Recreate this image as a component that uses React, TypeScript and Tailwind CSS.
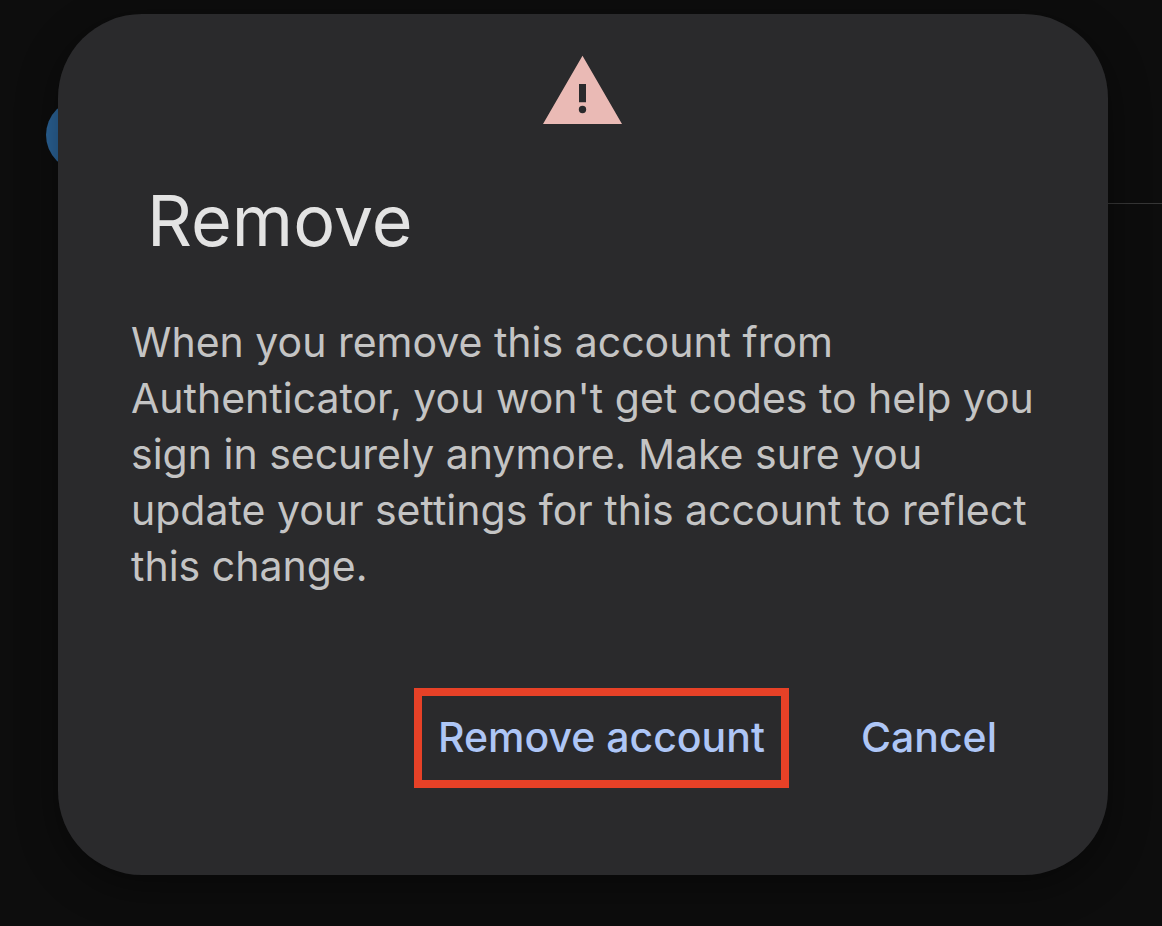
function WarningIcon() {
  return (
    <svg viewBox="0 0 80 70" className="w-20 h-[70px]" aria-hidden="true">
      <path
        fillRule="evenodd"
        fill="#eabab5"
        d="M39.5 .8 79 69H0L39.5 .8ZM36 29v18.2h7V29ZM39.5 50.8a3.7 3.7 0 1 0 0 7.4 3.7 3.7 0 0 0 0-7.4Z"
      />
    </svg>
  );
}

// Dimmed account row that sits behind the dialog
function AccountRow() {
  return (
    <div className="flex h-[204px] items-end pl-[46px]" aria-hidden="true">
      <div className="mb-[33px] h-[72px] w-[72px] shrink-0 rounded-full bg-[#2b6397]" />
      <div className="ml-6 h-px flex-1 bg-[#363636]" />
    </div>
  );
}

export default function App() {
  return (
    <div className="relative min-h-screen overflow-hidden bg-[#0d0d0d] font-['Inter',sans-serif]">
      <AccountRow />

      <div className="absolute inset-0 pt-[14px] pr-[54px] pl-[58px]">
        <div
          role="alertdialog"
          aria-labelledby="dialog-title"
          aria-describedby="dialog-text"
          className="rounded-[84px] bg-[#2a2a2c] px-[73px] pt-[41px] pb-[87px] shadow-[0_12px_40px_rgba(0,0,0,0.4)]"
        >
          <div className="flex justify-center">
            <WarningIcon />
          </div>

          <h1
            id="dialog-title"
            className="mt-14 pl-4 text-[70px] leading-[80px] font-normal text-[#e3e3e3]"
          >
            Remove
          </h1>

          <p id="dialog-text" className="mt-[53px] text-[41px] leading-[56px] text-[#c4c4c4]">
            When you remove this account from Authenticator, you won't get codes to help you sign in
            securely anymore. Make sure you update your settings for this account to reflect this
            change.
          </p>

          <div className="mt-[94px] flex items-center justify-end gap-14 pr-[22px] text-[41px] leading-[56px] font-medium text-[#aec6f6]">
            <button type="button" className="h-[100px] border-8 border-[#e64127] px-4 pb-[2px]">
              Remove account
            </button>
            <button type="button" className="h-[100px] px-4 pb-[2px]">
              Cancel
            </button>
          </div>
        </div>
      </div>
    </div>
  );
}
